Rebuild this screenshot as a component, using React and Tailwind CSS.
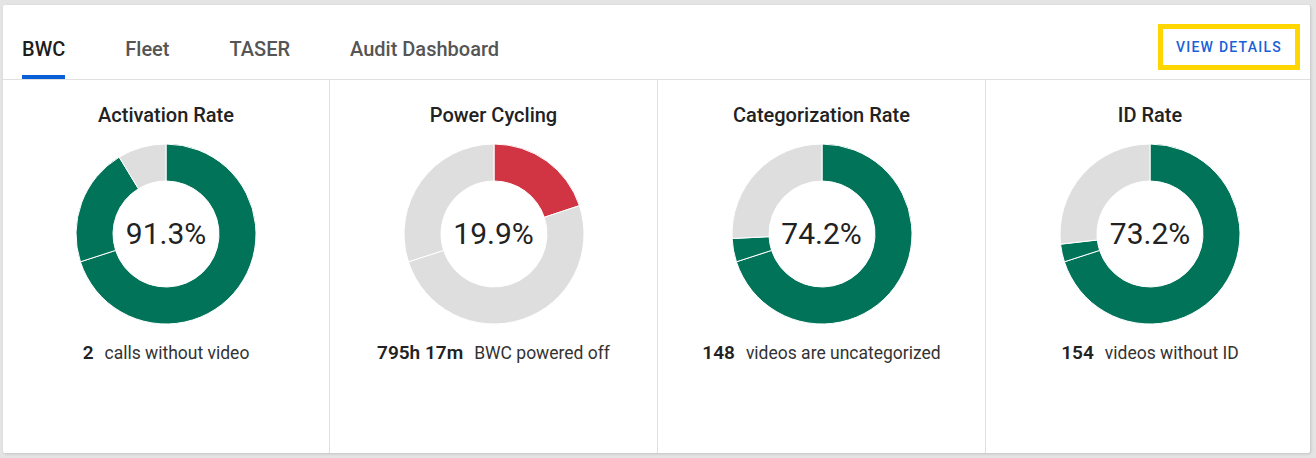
import React from "react";

const GREEN = "#007358";
const RED = "#d13544";
const GRAY = "#dedede";

const metrics = [
  {
    title: "Activation Rate",
    value: "91.3%",
    count: "2",
    label: "calls without video",
    slices: [
      [0, 0.7, GREEN],
      [0.7, 0.913, GREEN],
      [0.913, 1, GRAY],
    ],
  },
  {
    title: "Power Cycling",
    value: "19.9%",
    count: "795h 17m",
    label: "BWC powered off",
    slices: [
      [0, 0.199, RED],
      [0.199, 0.7, GRAY],
      [0.7, 1, GRAY],
    ],
  },
  {
    title: "Categorization Rate",
    value: "74.2%",
    count: "148",
    label: "videos are uncategorized",
    slices: [
      [0, 0.7, GREEN],
      [0.7, 0.742, GREEN],
      [0.742, 1, GRAY],
    ],
  },
  {
    title: "ID Rate",
    value: "73.2%",
    count: "154",
    label: "videos without ID",
    slices: [
      [0, 0.7, GREEN],
      [0.7, 0.732, GREEN],
      [0.732, 1, GRAY],
    ],
  },
];

const tabs = ["BWC", "Fleet", "TASER", "Audit Dashboard"];

// point on circle, fraction measured clockwise from 12 o'clock
function pt(r, f) {
  const a = f * Math.PI * 2;
  return [90 + r * Math.sin(a), 90 - r * Math.cos(a)];
}

function arc(from, to, ro = 90, ri = 53) {
  const large = to - from > 0.5 ? 1 : 0;
  const [x1, y1] = pt(ro, from);
  const [x2, y2] = pt(ro, to);
  const [x3, y3] = pt(ri, to);
  const [x4, y4] = pt(ri, from);
  return `M${x1} ${y1} A${ro} ${ro} 0 ${large} 1 ${x2} ${y2} L${x3} ${y3} A${ri} ${ri} 0 ${large} 0 ${x4} ${y4} Z`;
}

function Donut({ slices, value }) {
  return (
    <div className="relative w-[180px] h-[180px]">
      <svg width="180" height="180" viewBox="0 0 180 180">
        {slices.map(([from, to, color], i) => (
          <path key={i} d={arc(from, to)} fill={color} stroke="#fff" strokeWidth="1" />
        ))}
      </svg>
      <div className="absolute inset-0 flex items-center justify-center">
        <span className="text-[30px] leading-none text-[#222]">{value}</span>
      </div>
    </div>
  );
}

export default function App() {
  return (
    <div className="w-[1316px] h-[458px] bg-[#e4e4e4] pt-[5px] pl-[3px] pr-[6px] pb-[5px] font-['Roboto',sans-serif]">
      <div className="h-full bg-white rounded-[2px] shadow-[1px_1px_3px_rgba(0,0,0,0.15)] flex flex-col">
        {/* Tabs */}
        <div className="flex justify-between border-b border-[#e0e0e0]">
          <div className="flex gap-[60px] pl-[19px]">
            {tabs.map((t, i) => (
              <div key={t} className="flex flex-col pt-[31px]">
                <span
                  className={
                    i === 0
                      ? "text-[20px] leading-[26px] font-medium text-[#1d1d1d]"
                      : "text-[20px] leading-[26px] font-medium text-[#555]"
                  }
                >
                  {t}
                </span>
                <div className={i === 0 ? "mt-[13px] h-[4px] bg-[#0b5fd6]" : "mt-[13px] h-[4px]"}></div>
              </div>
            ))}
          </div>
          <div className="mt-[19px] mr-[10px] self-start border-[5px] border-[#ffd600] px-[13px] py-[8px] text-[14px] leading-[20px] font-medium tracking-[1.25px] text-[#1a5fd8]">
            VIEW DETAILS
          </div>
        </div>

        {/* Metrics */}
        <div className="flex-1 grid grid-cols-[327px_328px_328px_1fr]">
          {metrics.map((m, i) => (
            <div
              key={m.title}
              className={
                i < 3
                  ? "flex flex-col items-center pt-[22px] border-r border-[#e0e0e0]"
                  : "flex flex-col items-center pt-[22px] pl-[4px]"
              }
            >
              <div className="text-[20px] leading-[26px] font-medium text-[#222]">{m.title}</div>
              <div className="mt-[16px]">
                <Donut slices={m.slices} value={m.value} />
              </div>
              <div className="mt-[18px] flex items-baseline gap-[11px] leading-[22px]">
                <span className="text-[19px] font-semibold text-[#222]">{m.count}</span>
                <span className="text-[17.5px] text-[#333]">{m.label}</span>
              </div>
            </div>
          ))}
        </div>
      </div>
    </div>
  );
}
